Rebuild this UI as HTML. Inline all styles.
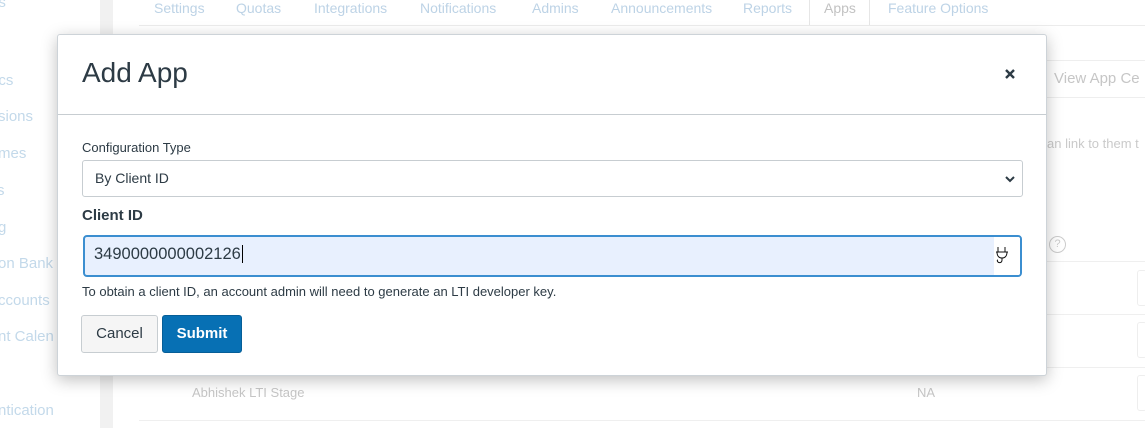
<!DOCTYPE html>
<html><head><style>
*{box-sizing:border-box;margin:0;padding:0}
body{width:1145px;height:428px;overflow:hidden;background:#fff;font-family:"Liberation Sans",sans-serif;position:relative}
.a{position:absolute;white-space:nowrap}
.sb{color:#c3d9ea;font-size:15px}
.tab{color:#bdd3e6;font-size:14px;top:0}
.modal{position:absolute;left:57px;top:34px;width:990px;height:342px;background:#fff;border:1px solid #cdd3d8;border-radius:3px;box-shadow:0 4px 16px rgba(0,0,0,.25)}
</style></head><body>
<div class="a" style="left:100px;top:0;width:13px;height:428px;background:#f1f1f1"></div>
<div class="a sb" style="left:-10px;top:-6px">es</div>
<div class="a sb" style="left:-4px;top:36px">,</div>
<div class="a sb" style="left:-5px;top:72px">ics</div>
<div class="a sb" style="left:-2px;top:108px">sions</div>
<div class="a sb" style="left:-2px;top:145px">mes</div>
<div class="a sb" style="left:-3px;top:182px">s</div>
<div class="a sb" style="left:-2px;top:219px">g</div>
<div class="a sb" style="left:-2px;top:255px">on Bank</div>
<div class="a sb" style="left:-2px;top:292px">ccounts</div>
<div class="a sb" style="left:-2px;top:328px">nt Calen</div>
<div class="a sb" style="left:-2px;top:402px">ntication</div>
<div class="a tab" style="left:154px">Settings</div>
<div class="a tab" style="left:236px">Quotas</div>
<div class="a tab" style="left:314px">Integrations</div>
<div class="a tab" style="left:420px">Notifications</div>
<div class="a tab" style="left:532px">Admins</div>
<div class="a tab" style="left:611px">Announcements</div>
<div class="a tab" style="left:743px">Reports</div>
<div class="a" style="left:809px;top:-2px;width:61px;height:28px;border:1px solid #e6e6e6;border-bottom:none;background:#fff"></div>
<div class="a tab" style="left:824px;color:#c2c2c2">Apps</div>
<div class="a tab" style="left:888px">Feature Options</div>
<div class="a" style="left:139px;top:25px;width:1006px;height:1px;background:#ececec"></div>
<div class="a" style="left:1040px;top:60px;width:110px;height:38px;border:1px solid #eee;border-radius:3px"></div>
<div class="a" style="left:1054px;top:70px;font-size:15px;color:#c6c6c6">View App Ce</div>
<div class="a" style="left:1047px;top:136px;font-size:13px;color:#cacaca">an link to them t</div>
<div class="a" style="left:1049px;top:236px;width:17px;height:17px;border:1px solid #ccc;border-radius:50%;font-size:11px;color:#ccc;text-align:center;line-height:15px">?</div>
<div class="a" style="left:139px;top:261px;width:1006px;height:1px;background:#efefef"></div>
<div class="a" style="left:139px;top:314px;width:1006px;height:1px;background:#efefef"></div>
<div class="a" style="left:139px;top:367px;width:1006px;height:1px;background:#efefef"></div>
<div class="a" style="left:139px;top:420px;width:1006px;height:1px;background:#efefef"></div>
<div class="a" style="left:1137px;top:270px;width:10px;height:36px;border:1px solid #eee;border-radius:3px"></div>
<div class="a" style="left:1137px;top:322px;width:10px;height:36px;border:1px solid #eee;border-radius:3px"></div>
<div class="a" style="left:1137px;top:375px;width:10px;height:36px;border:1px solid #eee;border-radius:3px"></div>
<div class="a" style="left:192px;top:385px;font-size:13px;color:#c6c6c6">Abhishek LTI Stage</div>
<div class="a" style="left:917px;top:385px;font-size:13px;color:#c6c6c6">NA</div>

<div class="modal">
 <div class="a" style="left:24px;top:22px;font-size:28px;color:#2d3b45">Add App</div>
 <svg class="a" style="left:946px;top:33px" width="12" height="12"><path d="M2 2l8 8M10 2l-8 8" stroke="#2d3b45" stroke-width="2.4"/></svg>
 <div class="a" style="left:0;top:79px;width:988px;height:1px;background:#c7cdd1"></div>
 <div class="a" style="left:24px;top:105px;font-size:13px;color:#2d3b45">Configuration Type</div>
 <div class="a" style="left:24px;top:125px;width:941px;height:37px;border:1px solid #c7cdd1;border-radius:3px"></div>
 <div class="a" style="left:37px;top:135px;font-size:14px;color:#2d3b45">By Client ID</div>
 <svg class="a" style="left:946px;top:139px" width="12" height="10"><path d="M2 3l4 4 4-4" stroke="#2d3b45" stroke-width="2" fill="none"/></svg>
 <div class="a" style="left:24px;top:172px;font-size:15px;font-weight:bold;color:#2d3b45">Client ID</div>
 <div class="a" style="left:25px;top:200px;width:939px;height:42px;border:2px solid #3b8ed0;border-radius:4px;background:#e8f0fe;overflow:hidden"><div style="position:absolute;right:0;top:0;width:26px;height:40px;background:#fff"></div></div>
 <div class="a" style="left:36px;top:210px;font-size:16.5px;color:#2d3b45">3490000000002126<span style="border-left:1px solid #000;margin-left:1px"></span></div>
 <svg class="a" style="left:936px;top:210px" width="16" height="20"><path d="M4 2v5M11 2v5M2 7h12M3 7c0 4 2 6 5 6s5-2 5-6M8 13v2c0 3-3 3-4 2s-1-2 0-2" stroke="#111" stroke-width="1" fill="none"/></svg>
 <div class="a" style="left:24px;top:249px;font-size:13px;color:#2d3b45">To obtain a client ID, an account admin will need to generate an LTI developer key.</div>
 <div class="a" style="left:23px;top:280px;width:77px;height:38px;background:#f5f5f5;border:1px solid #c7cdd1;border-radius:3px;font-size:15px;color:#2d3b45;text-align:center;line-height:36px">Cancel</div>
 <div class="a" style="left:104px;top:280px;width:80px;height:38px;background:#0770b4;border:1px solid #065e97;border-radius:3px;font-size:15px;font-weight:bold;color:#fff;text-align:center;line-height:36px">Submit</div>
</div>
</body></html>
